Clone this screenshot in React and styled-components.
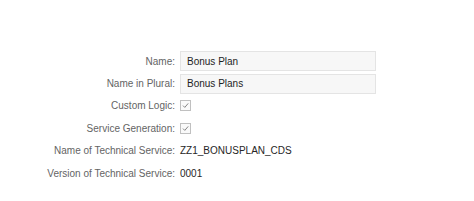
import React from "react";
import styled, { createGlobalStyle } from "styled-components";

const Global = createGlobalStyle`
  html, body {
    margin: 0;
    padding: 0;
    background: #ffffff;
  }
  body {
    font-family: "Liberation Sans", Arial, sans-serif;
  }
`;

const Form = styled.div`
  display: grid;
  grid-template-columns: 175px 1fr;
  column-gap: 5px;
  grid-auto-rows: 22.4px;
  padding-top: 50px;
  font-size: 10px;
`;

const Label = styled.div`
  display: flex;
  align-items: center;
  justify-content: flex-end;
  color: #646464;
  white-space: nowrap;
`;

const Value = styled.div`
  display: flex;
  align-items: center;
  color: #262626;
`;

const Input = styled.div`
  box-sizing: border-box;
  width: 196px;
  height: 20px;
  padding: 0 6px;
  display: flex;
  align-items: center;
  background: #f7f7f7;
  border: 1px solid #e4e4e4;
  color: #1e1e1e;
  font-size: 10px;
`;

const Check = styled.div`
  box-sizing: border-box;
  width: 11px;
  height: 11px;
  border: 1px solid #c0c0c0;
  background: #fafafa;
  display: flex;
  align-items: center;
  justify-content: center;
`;

const Text = styled.span`
  font-size: 10px;
`;

const CheckMark = () => (
  <svg width="9" height="9" viewBox="0 0 9 9">
    <path d="M2 4.6 L3.8 6.4 L7.2 2.4" fill="none" stroke="#858585" strokeWidth="1" />
  </svg>
);

const fields = [
  { label: "Name:", type: "input", value: "Bonus Plan" },
  { label: "Name in Plural:", type: "input", value: "Bonus Plans" },
  { label: "Custom Logic:", type: "check" },
  { label: "Service Generation:", type: "check" },
  { label: "Name of Technical Service:", type: "text", value: "ZZ1_BONUSPLAN_CDS" },
  { label: "Version of Technical Service:", type: "text", value: "0001" },
];

const App = () => {
  return (
    <>
      <Global />
      <Form>
        {fields.map((f) => (
          <React.Fragment key={f.label}>
            <Label>{f.label}</Label>
            <Value>
              {f.type === "input" ? (
                <Input>{f.value}</Input>
              ) : f.type === "check" ? (
                <Check>
                  <CheckMark />
                </Check>
              ) : (
                <Text>{f.value}</Text>
              )}
            </Value>
          </React.Fragment>
        ))}
      </Form>
    </>
  );
};

export default App;
